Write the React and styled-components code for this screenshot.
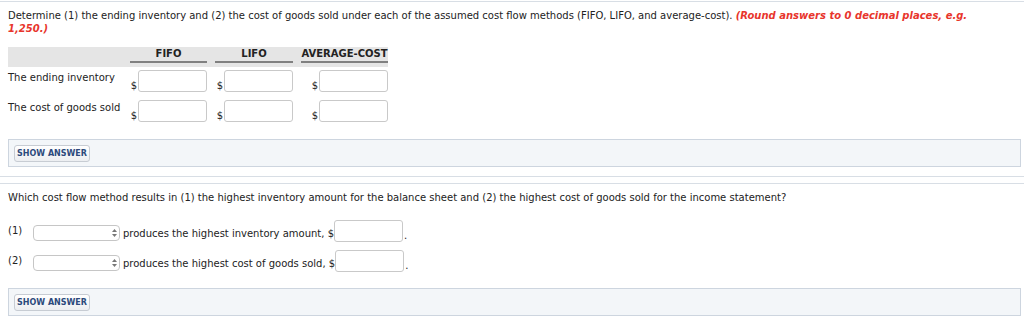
import React from "react"
import styled, { createGlobalStyle } from "styled-components"

const GlobalStyle = createGlobalStyle`
  body {
    margin: 0;
    background: #fff;
    font-family: Verdana, "DejaVu Sans", sans-serif;
    font-size: 10px;
    line-height: 13px;
    color: #222;
  }
`

const Panel = styled.section`
  width: 1013px;
  margin-top: ${p => p.$first ? "1px" : "6px"};
  padding: 7px 8px 9px 8px;
  border: 1px solid #d8dee5;
  border-left: none;
`

const Question = styled.p`
  margin: 0;
  max-width: ${p => p.$narrow ? "985px" : "none"};
`

const Hint = styled.span`
  color: #e8352c;
  font-weight: bold;
  font-style: italic;
`

const Table = styled.div`
  margin-top: 12px;
  width: 380px;
`

const HeadRow = styled.div`
  display: grid;
  grid-template-columns: 114px 77px 78px 87px;
  column-gap: 8px;
  background: #e5e5e5;
  padding-bottom: 4px;
`

const HeadCell = styled.div`
  font-weight: bold;
  text-align: center;
  white-space: nowrap;
  padding-bottom: 1px;
  border-bottom: ${p => p.$blank ? "none" : "2px solid #808080"};
`

const DataRow = styled.div`
  display: grid;
  grid-template-columns: 114px 77px 78px 87px;
  column-gap: 8px;
  margin-top: ${p => p.$first ? "3px" : "8px"};
`

const RowLabel = styled.div`
  padding-top: 1px;
  white-space: nowrap;
`

const MoneyCell = styled.div`
  display: flex;
  justify-content: flex-end;
  align-items: flex-end;
`

const Dollar = styled.span`
  margin-right: 1px;
  line-height: 12px;
`

const Field = styled.input`
  box-sizing: border-box;
  width: 69px;
  height: 22px;
  margin: 0;
  padding: 0 4px;
  border: 1px solid #c9c9c9;
  border-radius: 3px;
  background: #fff;
  font: inherit;
`

const AnswerBox = styled.div`
  margin-top: ${p => p.$gap}px;
  padding: 5px 5px 4px;
  border: 1px solid #cdd5df;
  background: #f3f6f9;
`

const ShowButton = styled.button`
  box-sizing: border-box;
  height: 17px;
  width: 76px;
  margin: 0;
  padding: 0;
  border: 1px solid #c7ccd3;
  border-radius: 3px;
  background: linear-gradient(#ffffff, #eceef1);
  color: #2c4a7c;
  font-family: Verdana, "DejaVu Sans", sans-serif;
  font-size: 8px;
  font-weight: bold;
  line-height: 15px;
  cursor: pointer;
`

const ChoiceRow = styled.div`
  display: flex;
  align-items: flex-end;
  height: 22px;
  margin-top: ${p => p.$gap}px;
`

const Num = styled.span`
  align-self: flex-start;
  width: 25px;
  margin-top: 4px;
`

const SelectWrap = styled.div`
  position: relative;
  width: 87px;
  height: 16px;
  margin-bottom: 1px;
`

const Select = styled.select`
  appearance: none;
  box-sizing: border-box;
  width: 100%;
  height: 100%;
  margin: 0;
  border: 1px solid #c6c6c6;
  border-radius: 4px;
  background: #fff;
  font: inherit;
`

const Arrows = styled.svg`
  position: absolute;
  right: 3px;
  top: 4px;
  pointer-events: none;
`

const Phrase = styled.span`
  margin-left: 3px;
  margin-bottom: 2px;
  white-space: nowrap;
`

const Stop = styled.span`
  margin-left: 1px;
`

const rows = [
  { id: 1, label: "The ending inventory" },
  { id: 2, label: "The cost of goods sold" },
]

const choices = [
  { id: 1, text: "produces the highest inventory amount, $" },
  { id: 2, text: "produces the highest cost of goods sold, $" },
]

const App = () => (
  <>
    <GlobalStyle />
    <Panel $first>
      <Question $narrow>
        Determine (1) the ending inventory and (2) the cost of goods sold under each of the assumed cost flow methods (FIFO, LIFO, and average-cost).{" "}
        <Hint>(Round answers to 0 decimal places, e.g.</Hint>{" "}
        <Hint>1,250.)</Hint>
      </Question>
      <Table>
        <HeadRow>
          <HeadCell $blank />
          <HeadCell>FIFO</HeadCell>
          <HeadCell>LIFO</HeadCell>
          <HeadCell>AVERAGE-COST</HeadCell>
        </HeadRow>
        {rows.map((row, i) => (
          <DataRow key={row.id} $first={i === 0}>
            <RowLabel>{row.label}</RowLabel>
            {["fifo", "lifo", "avg"].map(col => (
              <MoneyCell key={col}>
                <Dollar>$</Dollar>
                <Field type="text" />
              </MoneyCell>
            ))}
          </DataRow>
        ))}
      </Table>
      <AnswerBox $gap={17}>
        <ShowButton>SHOW ANSWER</ShowButton>
      </AnswerBox>
    </Panel>
    <Panel>
      <Question>
        Which cost flow method results in (1) the highest inventory amount for the balance sheet and (2) the highest cost of goods sold for the income statement?
      </Question>
      {choices.map((c, i) => (
        <ChoiceRow key={c.id} $gap={i === 0 ? 16 : 8}>
          <Num>({c.id})</Num>
          <SelectWrap>
            <Select defaultValue="">
              <option value=""></option>
              <option>FIFO</option>
              <option>LIFO</option>
              <option>Average-cost</option>
            </Select>
            <Arrows width="5" height="8" viewBox="0 0 5 8">
              <path d="M2.5 0 L5 3 L0 3 Z" fill="#777" />
              <path d="M2.5 8 L5 5 L0 5 Z" fill="#777" />
            </Arrows>
          </SelectWrap>
          <Phrase>{c.text}</Phrase>
          <Field type="text" />
          <Stop>.</Stop>
        </ChoiceRow>
      ))}
      <AnswerBox $gap={16}>
        <ShowButton>SHOW ANSWER</ShowButton>
      </AnswerBox>
    </Panel>
  </>
)

export default App
